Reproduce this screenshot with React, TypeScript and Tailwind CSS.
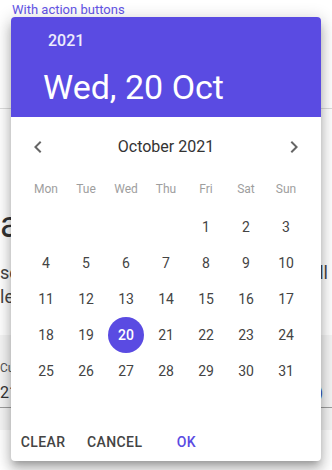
import React from "react";

const weekdays = ["Mon", "Tue", "Wed", "Thu", "Fri", "Sat", "Sun"];

function buildWeeks(): (number | null)[][] {
  const cells: (number | null)[] = [null, null, null, null];
  for (let d = 1; d <= 31; d++) cells.push(d);
  while (cells.length % 7 !== 0) cells.push(null);
  const weeks: (number | null)[][] = [];
  for (let i = 0; i < cells.length; i += 7) weeks.push(cells.slice(i, i + 7));
  return weeks;
}

export default function App() {
  const weeks = buildWeeks();
  return (
    <div
      className="relative w-[332px] h-[470px] overflow-hidden bg-white"
      style={{ fontFamily: "Roboto, 'Noto Sans', sans-serif" }}
    >
      {/* background page */}
      <div className="h-[109px] border-b border-[#dcdcdc] pl-3 pt-[2px]">
        <div className="text-[13px] leading-[16px] text-[#6354e6]">With action buttons</div>
      </div>
      <div className="mt-[96px] text-[36px] leading-[40px] text-[#333]">a</div>
      <div className="mt-[16px] text-[18px] leading-[24px] text-[#444]">
        <div className="flex justify-between pr-[4px]">
          <span>se</span>
          <span>ll</span>
        </div>
        <div>le</div>
      </div>
      <div className="mt-[26px] h-[95px] bg-[#f5f5f5] pt-[26px]">
        <div className="text-[12px] leading-[14px] text-[#555]">Cu</div>
        <div className="mt-[7px] flex justify-between text-[16px] leading-[22px] text-[#333] border-b border-[#9e9e9e] pb-[3px] pr-[9px]">
          <span>21</span>
          <span className="text-[#3f51b5]">)</span>
        </div>
      </div>

      {/* dialog */}
      <div className="absolute left-[11px] top-[17px] w-[310px] rounded-[4px] overflow-hidden bg-white shadow-[0px_5px_6px_-3px_rgba(0,0,0,0.22),0px_9px_12px_1px_rgba(0,0,0,0.16),0px_3px_16px_3px_rgba(0,0,0,0.14)]">
        <div className="h-[100px] bg-[#5a4be2] pl-8 pt-4 text-white">
          <div className="ml-[5px] text-[16px] leading-4 font-medium text-white/90">2021</div>
          <div className="mt-[21px] text-[34px] leading-[34px]">Wed, 20 Oct</div>
        </div>
        <div className="px-[15px]">
          <div className="mt-[18px] h-6 flex items-center justify-between">
            <svg width="24" height="24" viewBox="0 0 24 24" className="fill-[#666]">
              <path d="M15.41 16.59L10.83 12l4.58-4.59L14 6l-6 6 6 6 1.41-1.41z" />
            </svg>
            <div className="text-[16px] text-[#333]">October 2021</div>
            <svg width="24" height="24" viewBox="0 0 24 24" className="fill-[#666]">
              <path d="M8.59 16.59L13.17 12 8.59 7.41 10 6l6 6-6 6-1.41-1.41z" />
            </svg>
          </div>
          <div className="mt-[21px] h-4 grid grid-cols-[repeat(7,40px)]">
            {weekdays.map((w) => (
              <div key={w} className="flex items-center justify-center text-[12px] text-[#9e9e9e]">
                {w}
              </div>
            ))}
          </div>
          <div className="mt-[13px] flex flex-col">
            {weeks.map((wk, i) => (
              <div key={i} className="grid grid-cols-[repeat(7,40px)] h-9">
                {wk.map((d, j) => (
                  <div key={j} className="flex items-center justify-center">
                    {d === null ? null : d === 20 ? (
                      <div className="w-9 h-9 rounded-full bg-[#5a4be2] text-white font-medium text-[14px] flex items-center justify-center">
                        {d}
                      </div>
                    ) : (
                      <span className="text-[14px] text-[#444]">{d}</span>
                    )}
                  </div>
                ))}
              </div>
            ))}
          </div>
        </div>
        <div className="mt-[35px] mb-px flex gap-1 h-9">
          <button className="min-w-16 px-2 h-9 text-[14px] font-medium tracking-[0.4px] text-[#444]">CLEAR</button>
          <button className="min-w-16 px-2 h-9 text-[14px] font-medium tracking-[0.4px] text-[#444]">CANCEL</button>
          <button className="min-w-16 px-2 h-9 text-[14px] font-medium tracking-[0.4px] text-[#5a4be2]">OK</button>
        </div>
      </div>
    </div>
  );
}
